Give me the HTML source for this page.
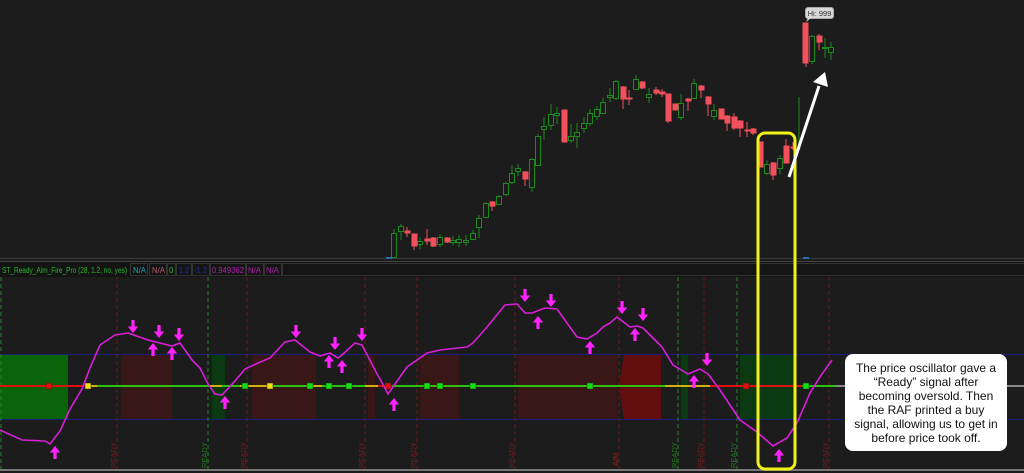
<!DOCTYPE html>
<html><head><meta charset="utf-8"><style>
html,body{margin:0;padding:0;background:#1c1c1c;}
svg{display:block}
text{font-family:"Liberation Sans",sans-serif}
</style></head><body>
<svg width="1024" height="473" viewBox="0 0 1024 473" xmlns="http://www.w3.org/2000/svg">
<rect width="1024" height="473" fill="#1c1c1c"/>
<rect x="0" y="258" width="1024" height="1" fill="#3a3a3a"/>
<rect x="0" y="261" width="1024" height="1" fill="#444"/>
<rect x="386" y="257" width="6" height="2" fill="#2a6ab0"/>
<rect x="803" y="257" width="6" height="2" fill="#2a6ab0"/>
<rect x="0" y="262" width="1024" height="15" fill="#141414"/>
<g stroke="#333" fill="#141414">
<rect x="130.5" y="263.5" width="17" height="12"/><rect x="149.5" y="263.5" width="17" height="12"/>
<rect x="167.5" y="263.5" width="8" height="12"/><rect x="176.5" y="263.5" width="15" height="12"/>
<rect x="192.5" y="263.5" width="17" height="12"/><rect x="210.5" y="263.5" width="35" height="12"/>
<rect x="246.5" y="263.5" width="17" height="12"/><rect x="264.5" y="263.5" width="17" height="12"/>
<rect x="282.5" y="263.5" width="742" height="12"/>
</g>
<g font-size="8" lengthAdjust="spacingAndGlyphs">
<text x="2" y="273" fill="#2db52d" textLength="125" lengthAdjust="spacingAndGlyphs">ST_Ready_Aim_Fire_Pro (28, 1.2, no, yes)</text>
<text x="133" y="273" fill="#1aa0b0" textLength="13" lengthAdjust="spacingAndGlyphs">N/A</text>
<text x="152" y="273" fill="#b05a6a" textLength="13" lengthAdjust="spacingAndGlyphs">N/A</text>
<text x="169" y="273" fill="#2db52d">0</text>
<text x="179" y="273" fill="#2030a0" textLength="10" lengthAdjust="spacingAndGlyphs">1.2</text>
<text x="194" y="273" fill="#2030a0" textLength="13" lengthAdjust="spacingAndGlyphs">-1.2</text>
<text x="212" y="273" fill="#b020b0" textLength="32" lengthAdjust="spacingAndGlyphs">0.949362</text>
<text x="248" y="273" fill="#b020b0" textLength="13" lengthAdjust="spacingAndGlyphs">N/A</text>
<text x="266" y="273" fill="#b020b0" textLength="13" lengthAdjust="spacingAndGlyphs">N/A</text>
</g>
<rect x="0" y="354" width="68" height="65" fill="#0a650a"/>
<rect x="121" y="354" width="51" height="65" fill="#3a1717"/>
<rect x="212" y="354" width="13" height="65" fill="#0b3a12"/>
<rect x="252" y="354" width="64" height="65" fill="#3a1717"/>
<rect x="368" y="354" width="7" height="65" fill="#3a1717"/>
<rect x="420" y="354" width="39" height="65" fill="#3a1717"/>
<rect x="518" y="354" width="99" height="65" fill="#3a1717"/>
<polygon points="624,354 661,354 661,419 624,419 620,395 620,378" fill="#620e0e"/>
<rect x="681" y="354" width="7" height="65" fill="#0b3a12"/>
<rect x="740" y="354" width="56" height="65" fill="#0b3a12"/>
<rect x="0" y="354" width="1024" height="1" fill="#1c1c80"/>
<rect x="0" y="419" width="1024" height="1" fill="#1c1c80"/>
<g stroke-width="1" stroke-dasharray="4,3">
<line x1="1" y1="277" x2="1" y2="470" stroke="#1f8a1f"/>
<line x1="208" y1="277" x2="208" y2="470" stroke="#1f8a1f"/>
<line x1="678" y1="277" x2="678" y2="470" stroke="#1f8a1f"/>
<line x1="737" y1="277" x2="737" y2="470" stroke="#1f8a1f"/>
<line x1="117" y1="277" x2="117" y2="470" stroke="#6a1a1a"/>
<line x1="247" y1="277" x2="247" y2="470" stroke="#6a1a1a"/>
<line x1="365" y1="277" x2="365" y2="470" stroke="#6a1a1a"/>
<line x1="417" y1="277" x2="417" y2="470" stroke="#6a1a1a"/>
<line x1="515" y1="277" x2="515" y2="470" stroke="#6a1a1a"/>
<line x1="619" y1="277" x2="619" y2="470" stroke="#6a1a1a"/>
<line x1="704" y1="277" x2="704" y2="470" stroke="#6a1a1a"/>
<line x1="829" y1="277" x2="829" y2="470" stroke="#6a1a1a"/>
</g>
<g font-size="7.5">
<text transform="translate(116,468) rotate(-90)" fill="#7a1a1a">READY</text>
<text transform="translate(207,468) rotate(-90)" fill="#1f7a1f">READY</text>
<text transform="translate(246,468) rotate(-90)" fill="#7a1a1a">READY</text>
<text transform="translate(364,468) rotate(-90)" fill="#7a1a1a">READY</text>
<text transform="translate(416,468) rotate(-90)" fill="#7a1a1a">READY</text>
<text transform="translate(514,468) rotate(-90)" fill="#7a1a1a">READY</text>
<text transform="translate(618,466) rotate(-90)" fill="#a01818">AIM</text>
<text transform="translate(677,468) rotate(-90)" fill="#1f7a1f">READY</text>
<text transform="translate(703,468) rotate(-90)" fill="#7a1a1a">READY</text>
<text transform="translate(736,468) rotate(-90)" fill="#1f7a1f">READY</text>
<text transform="translate(828,468) rotate(-90)" fill="#7a1a1a">READY</text>
</g>
<g stroke-width="2">
<line x1="0" y1="386" x2="88" y2="386" stroke="#e01010"/>
<line x1="88" y1="386" x2="97" y2="386" stroke="#d0b010"/>
<line x1="97" y1="386" x2="210" y2="386" stroke="#2cc010"/>
<line x1="210" y1="386" x2="222" y2="386" stroke="#d0b010"/>
<line x1="222" y1="386" x2="240" y2="386" stroke="#2cc010"/>
<line x1="240" y1="386" x2="268" y2="386" stroke="#d0b010"/>
<line x1="268" y1="386" x2="310" y2="386" stroke="#2cc010"/>
<line x1="310" y1="386" x2="322" y2="386" stroke="#d0b010"/>
<line x1="322" y1="386" x2="365" y2="386" stroke="#2cc010"/>
<line x1="365" y1="386" x2="378" y2="386" stroke="#d0b010"/>
<line x1="378" y1="386" x2="392" y2="386" stroke="#e01010"/>
<line x1="392" y1="386" x2="665" y2="386" stroke="#2cc010"/>
<line x1="665" y1="386" x2="710" y2="386" stroke="#d0b010"/>
<line x1="710" y1="386" x2="802" y2="386" stroke="#e01010"/>
<line x1="802" y1="386" x2="835" y2="386" stroke="#2cc010"/>
<line x1="835" y1="386" x2="1024" y2="386" stroke="#888"/>
</g>
<g stroke="#222" stroke-width="0.5">
<rect x="46" y="383" width="6" height="6" fill="#e01010"/>
<rect x="85" y="383" width="6" height="6" fill="#f0e010"/>
<rect x="242" y="383" width="6" height="6" fill="#10e010"/>
<rect x="267" y="383" width="6" height="6" fill="#f0e010"/>
<rect x="307" y="383" width="6" height="6" fill="#10e010"/>
<rect x="326" y="383" width="6" height="6" fill="#10e010"/>
<rect x="346" y="383" width="6" height="6" fill="#10e010"/>
<rect x="385" y="383" width="6" height="6" fill="#e01010"/>
<rect x="424" y="383" width="6" height="6" fill="#10e010"/>
<rect x="437" y="383" width="6" height="6" fill="#10e010"/>
<rect x="470" y="383" width="6" height="6" fill="#10e010"/>
<rect x="587" y="383" width="6" height="6" fill="#10e010"/>
<rect x="743" y="383" width="6" height="6" fill="#e01010"/>
<rect x="803" y="383" width="6" height="6" fill="#10e010"/>
</g>
<polyline fill="none" stroke="#d81ed8" stroke-width="1.6" points="0,430 22,440 45,441 50,444 60,431 70,409 82,389 90,368 100,345 115,335 128,333 148,340 160,343 172,346 180,343 192,360 200,368 208,384 215,394 222,395 235,381 245,369 258,363 270,358 285,342 295,340 310,352 320,356 330,353 338,358 342,355 355,343 362,345 375,370 388,394 395,384 407,367 427,353 440,350 467,347 473,343 487,327 505,305 517,304 525,313 532,313 545,308 557,309 567,323 577,337 587,339 597,333 603,327 610,323 617,317 630,327 637,326 643,328 653,338 662,347 673,365 688,374 700,369 708,374 720,390 740,420 757,432 773,446 787,438 797,423 810,393 820,377 832,360"/>
<defs>
<path id="dn" d="M-1.6,-13 h3.2 v6.5 h3.6 l-5.2,6.5 l-5.2,-6.5 h3.6 z" fill="#ff22ff"/>
<path id="up" d="M-1.6,13 h3.2 v-6.5 h3.6 l-5.2,-6.5 l-5.2,6.5 h3.6 z" fill="#ff22ff"/>
</defs>
<use href="#dn" x="133" y="333"/><use href="#dn" x="159" y="338"/><use href="#dn" x="179" y="341"/>
<use href="#dn" x="296" y="338"/><use href="#dn" x="335" y="350"/><use href="#dn" x="362" y="341"/>
<use href="#dn" x="525" y="302"/><use href="#dn" x="551" y="307"/><use href="#dn" x="622" y="314"/>
<use href="#dn" x="643" y="321"/><use href="#dn" x="707" y="366"/>
<use href="#up" x="153" y="343"/><use href="#up" x="172" y="347"/><use href="#up" x="55" y="446"/>
<use href="#up" x="225" y="396"/><use href="#up" x="329" y="355"/><use href="#up" x="342" y="360"/>
<use href="#up" x="394" y="398"/><use href="#up" x="538" y="316"/><use href="#up" x="590" y="341"/>
<use href="#up" x="635" y="328"/><use href="#up" x="694" y="375"/><use href="#up" x="779" y="449"/>
<rect x="0" y="469" width="1024" height="2" fill="#777"/>
<g stroke="#1d8a1d" stroke-width="1" fill="#1c1c1c">
<line x1="394" y1="229" x2="394" y2="258"/><rect x="391.5" y="233.5" width="5" height="24"/>
<line x1="401" y1="224" x2="401" y2="240"/><rect x="398.5" y="226.5" width="5" height="5"/>
<line x1="420" y1="238" x2="420" y2="249"/><rect x="417.5" y="241.5" width="5" height="3"/>
<line x1="440" y1="234" x2="440" y2="247"/><rect x="437.5" y="237.5" width="5" height="7"/>
<line x1="453" y1="236" x2="453" y2="245"/><rect x="450.5" y="240.5" width="5" height="2"/>
<line x1="459" y1="235" x2="459" y2="247"/><rect x="456.5" y="239.5" width="5" height="3"/>
<line x1="466" y1="235" x2="466" y2="246"/><rect x="463.5" y="240.5" width="5" height="2"/>
<line x1="473" y1="230" x2="473" y2="240"/><rect x="470.5" y="233.5" width="5" height="6"/>
<line x1="479" y1="215" x2="479" y2="238"/><rect x="476.5" y="218.5" width="5" height="9"/>
<line x1="486" y1="202" x2="486" y2="218"/><rect x="483.5" y="203.5" width="5" height="14"/>
<line x1="499" y1="195" x2="499" y2="205"/><rect x="496.5" y="196.5" width="5" height="8"/>
<line x1="506" y1="182" x2="506" y2="196"/><rect x="503.5" y="183.5" width="5" height="11"/>
<line x1="512" y1="165" x2="512" y2="184"/><rect x="509.5" y="173.5" width="5" height="9"/>
<line x1="518" y1="164" x2="518" y2="176"/><rect x="515.5" y="168.5" width="5" height="3"/>
<line x1="532" y1="158" x2="532" y2="192"/><rect x="529.5" y="159.5" width="5" height="28"/>
<line x1="538" y1="134" x2="538" y2="166"/><rect x="535.5" y="136.5" width="5" height="29"/>
<line x1="544" y1="117" x2="544" y2="140"/><rect x="541.5" y="126.5" width="5" height="3"/>
<line x1="551" y1="104" x2="551" y2="130"/><rect x="548.5" y="114.5" width="5" height="11"/>
<line x1="557" y1="107" x2="557" y2="124"/><rect x="554.5" y="113.5" width="5" height="2"/>
<line x1="571" y1="124" x2="571" y2="143"/><rect x="568.5" y="136.5" width="5" height="4"/>
<line x1="577" y1="123" x2="577" y2="148"/><rect x="574.5" y="132.5" width="5" height="4"/>
<line x1="584" y1="117" x2="584" y2="133"/><rect x="581.5" y="123.5" width="5" height="5"/>
<line x1="590" y1="109" x2="590" y2="126"/><rect x="587.5" y="113.5" width="5" height="10"/>
<line x1="597" y1="106" x2="597" y2="120"/><rect x="594.5" y="109.5" width="5" height="7"/>
<line x1="603" y1="98" x2="603" y2="114"/><rect x="600.5" y="102.5" width="5" height="11"/>
<line x1="610" y1="88" x2="610" y2="102"/><rect x="607.5" y="95.5" width="5" height="2"/>
<line x1="616" y1="80" x2="616" y2="100"/><rect x="613.5" y="81.5" width="5" height="17"/>
<line x1="636" y1="75" x2="636" y2="90"/><rect x="633.5" y="79.5" width="5" height="10"/>
<line x1="649" y1="88" x2="649" y2="103"/><rect x="646.5" y="94.5" width="5" height="3"/>
<line x1="681" y1="94" x2="681" y2="120"/><rect x="678.5" y="103.5" width="5" height="14"/>
<line x1="694" y1="79" x2="694" y2="99"/><rect x="691.5" y="83.5" width="5" height="15"/>
<line x1="714" y1="104" x2="714" y2="120"/><rect x="711.5" y="110.5" width="5" height="6"/>
<line x1="767" y1="160" x2="767" y2="175"/><rect x="764.5" y="164.5" width="5" height="9"/>
<line x1="780" y1="155" x2="780" y2="174"/><rect x="777.5" y="158.5" width="5" height="10"/>
<line x1="799" y1="97" x2="799" y2="147"/>
<line x1="812" y1="35" x2="812" y2="64"/><rect x="809.5" y="36.5" width="5" height="25"/>
<line x1="825" y1="38" x2="825" y2="58"/><rect x="822.5" y="47.5" width="5" height="1"/>
<line x1="831" y1="42" x2="831" y2="60"/><rect x="828.5" y="47.5" width="5" height="5"/>
</g>
<g fill="#f2505c" stroke="#f2505c" stroke-width="1">
<line x1="407" y1="227" x2="407" y2="237"/><rect x="405" y="231" width="5" height="2"/>
<line x1="414" y1="234" x2="414" y2="250"/><rect x="412" y="234" width="5" height="12"/>
<line x1="427" y1="229" x2="427" y2="245"/><rect x="425" y="239" width="5" height="2"/>
<line x1="433" y1="237" x2="433" y2="247"/><rect x="431" y="238" width="5" height="8"/>
<line x1="447" y1="237" x2="447" y2="243"/><rect x="445" y="238" width="5" height="4"/>
<line x1="492" y1="201" x2="492" y2="211"/><rect x="490" y="202" width="5" height="4"/>
<line x1="525" y1="171" x2="525" y2="186"/><rect x="523" y="172" width="5" height="7"/>
<rect x="562" y="110" width="5" height="32"/>
<line x1="623" y1="86" x2="623" y2="109"/><rect x="621" y="87" width="5" height="12"/>
<line x1="629" y1="90" x2="629" y2="105"/><rect x="627" y="98" width="5" height="1"/>
<line x1="642" y1="81" x2="642" y2="89"/><rect x="640" y="82" width="5" height="6"/>
<line x1="656" y1="87" x2="656" y2="95"/><rect x="654" y="90" width="5" height="3"/>
<line x1="662" y1="89" x2="662" y2="97"/><rect x="660" y="92" width="5" height="2"/>
<line x1="668" y1="94" x2="668" y2="123"/><rect x="666" y="94" width="5" height="27"/>
<rect x="673" y="104" width="5" height="6"/>
<line x1="688" y1="98" x2="688" y2="111"/><rect x="686" y="99" width="5" height="2"/>
<line x1="701" y1="85" x2="701" y2="98"/><rect x="699" y="86" width="5" height="4"/>
<line x1="708" y1="96" x2="708" y2="116"/><rect x="706" y="97" width="5" height="7"/>
<rect x="719" y="109" width="5" height="10"/>
<line x1="727" y1="115" x2="727" y2="131"/><rect x="725" y="116" width="5" height="7"/>
<line x1="734" y1="113" x2="734" y2="130"/><rect x="732" y="117" width="5" height="11"/>
<line x1="740" y1="120" x2="740" y2="137"/><rect x="738" y="121" width="5" height="7"/>
<line x1="747" y1="122" x2="747" y2="137"/><rect x="745" y="130" width="5" height="1"/>
<line x1="753" y1="128" x2="753" y2="135"/><rect x="751" y="129" width="5" height="4"/>
<rect x="759" y="142" width="4" height="25"/>
<line x1="773" y1="162" x2="773" y2="180"/><rect x="771" y="163" width="5" height="12"/>
<line x1="786" y1="139" x2="786" y2="163"/><rect x="784" y="146" width="5" height="17"/>
<line x1="793" y1="142" x2="793" y2="150"/><rect x="791" y="147" width="5" height="1"/>
<line x1="806" y1="23" x2="806" y2="67"/><rect x="803" y="23" width="5" height="40"/>
<line x1="819" y1="34" x2="819" y2="50"/><rect x="817" y="36" width="5" height="6"/>
</g>
<rect x="805.5" y="7.5" width="28" height="11" rx="2.5" fill="#d8d8d8" stroke="#aaa"/>
<path d="M808,18 L806,22 L811,18 Z" fill="#d8d8d8"/>
<text x="819.5" y="16" font-size="7.5" fill="#333" text-anchor="middle">Hi: 999</text>
<rect x="758" y="133" width="37" height="336" rx="7" fill="none" stroke="#f2f218" stroke-width="3"/>
<line x1="789" y1="177" x2="819" y2="86" stroke="#fff" stroke-width="3"/>
<polygon points="825,72 813,82 828,87" fill="#fff"/>
<rect x="845" y="354" width="162" height="97" rx="8" fill="#fff"/>
<g font-size="12" fill="#111" text-anchor="middle">
<text x="926" y="372">The price oscillator gave a</text>
<text x="926" y="386">“Ready” signal after</text>
<text x="926" y="400">becoming oversold. Then</text>
<text x="926" y="414">the RAF printed a buy</text>
<text x="926" y="428">signal, allowing us to get in</text>
<text x="926" y="442">before price took off.</text>
</g>
</svg>
</body></html>
